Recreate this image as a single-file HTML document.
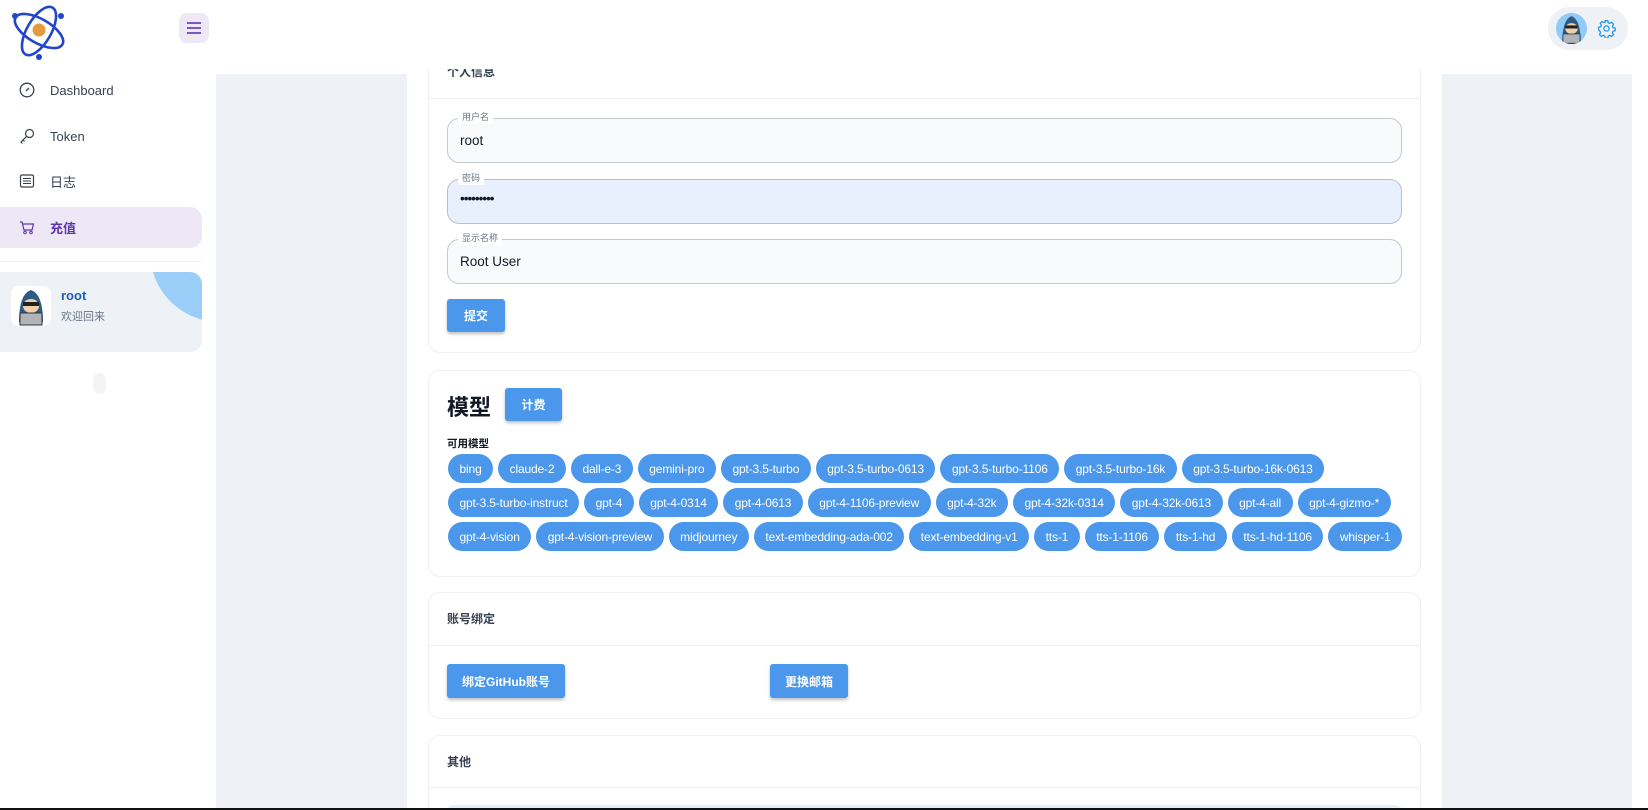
<!DOCTYPE html>
<html><head><meta charset="utf-8"><style>
*{box-sizing:border-box;margin:0;padding:0}
html,body{width:1648px;height:810px;overflow:hidden}
body{background:#fff;font-family:"Liberation Sans","Noto Sans CJK SC",sans-serif;color:#364152;position:relative}
#wrap{position:absolute;left:0;top:0;width:1648px;height:808px;overflow:hidden}
.abs{position:absolute}
.grey{background:#eef2f6}
.nav{position:absolute;left:0;width:202px;height:40px;display:flex;align-items:center;font-size:13px;color:#364152}
.nav svg{position:absolute;left:19px}
.nav span{position:absolute;left:50px}
.card{position:absolute;left:428px;width:993px;background:#fff;border:1px solid #eef0f3;border-radius:12px}
.field{position:absolute;left:447px;width:955px;height:45px;border:1px solid #c4c9d0;border-radius:12px;background:#f8fafc}
.field .lb{position:absolute;top:-9px;left:10px;background:#fff;padding:0 4px;font-size:9px;color:#697586;line-height:14px}
.field .v{position:absolute;left:12px;top:14px;font-size:13.5px;color:#121926;font-weight:500}
.btn{position:absolute;background:#4a97eb;color:#fff;font-size:12px;font-weight:bold;border-radius:3px;display:flex;align-items:center;justify-content:center;box-shadow:0 2px 3px rgba(0,0,0,.25)}
.row{position:absolute;left:448px;display:flex;gap:5px}
.chip{height:29px;background:#4a97eb;color:#fff;border-radius:15px;padding:0 11.5px;font-size:12px;letter-spacing:-0.15px;display:flex;align-items:center;white-space:nowrap}
.ttl{position:absolute;font-size:12px;font-weight:bold;color:#364152}
.hr{position:absolute;left:428px;width:993px;height:1px;background:#eef0f3}
</style></head><body><div id="wrap">
<div class="abs grey" style="left:216px;top:74px;width:191px;height:736px"></div>
<div class="abs grey" style="left:1442px;top:74px;width:190px;height:736px"></div>

<div class="card" style="top:40px;height:313px;border-radius:0 0 12px 12px"></div>
<div class="ttl" style="left:447px;top:63px;color:#364152">个人信息</div>
<div class="hr" style="top:98px"></div>
<div class="field" style="top:118px"><div class="lb">用户名</div><div class="v">root</div></div>
<div class="field" style="top:179px;background:#e8f0fe;border-color:#b8c0cc"><div class="lb">密码</div><div class="v" style="top:11px;letter-spacing:-1px">•••••••••</div></div>
<div class="field" style="top:239px"><div class="lb">显示名称</div><div class="v">Root User</div></div>
<div class="btn" style="left:447px;top:299px;width:58px;height:33px">提交</div>

<div class="card" style="top:370px;height:207px"></div>
<div class="abs" style="left:447px;top:390px;font-size:22px;font-weight:bold;color:#121926">模型</div>
<div class="btn" style="left:505px;top:388px;width:57px;height:33px">计费</div>
<div class="abs" style="left:447px;top:436px;font-size:10.5px;font-weight:bold;color:#121926">可用模型</div>
<div class="row" style="top:454px"><div class="chip">bing</div><div class="chip">claude-2</div><div class="chip">dall-e-3</div><div class="chip">gemini-pro</div><div class="chip">gpt-3.5-turbo</div><div class="chip">gpt-3.5-turbo-0613</div><div class="chip">gpt-3.5-turbo-1106</div><div class="chip">gpt-3.5-turbo-16k</div><div class="chip">gpt-3.5-turbo-16k-0613</div></div>
<div class="row" style="top:488px"><div class="chip">gpt-3.5-turbo-instruct</div><div class="chip">gpt-4</div><div class="chip">gpt-4-0314</div><div class="chip">gpt-4-0613</div><div class="chip">gpt-4-1106-preview</div><div class="chip">gpt-4-32k</div><div class="chip">gpt-4-32k-0314</div><div class="chip">gpt-4-32k-0613</div><div class="chip">gpt-4-all</div><div class="chip">gpt-4-gizmo-*</div></div>
<div class="row" style="top:522px"><div class="chip">gpt-4-vision</div><div class="chip">gpt-4-vision-preview</div><div class="chip">midjourney</div><div class="chip">text-embedding-ada-002</div><div class="chip">text-embedding-v1</div><div class="chip">tts-1</div><div class="chip">tts-1-1106</div><div class="chip">tts-1-hd</div><div class="chip">tts-1-hd-1106</div><div class="chip">whisper-1</div></div>

<div class="card" style="top:592px;height:127px"></div>
<div class="ttl" style="left:447px;top:610px">账号绑定</div>
<div class="hr" style="top:645px"></div>
<div class="btn" style="left:447px;top:664px;width:118px;height:34px">绑定GitHub账号</div>
<div class="btn" style="left:770px;top:664px;width:78px;height:34px">更换邮箱</div>

<div class="card" style="top:735px;height:100px"></div>
<div class="ttl" style="left:447px;top:753px">其他</div>
<div class="hr" style="top:787px"></div>
<div class="abs" style="left:447px;top:805px;width:955px;height:6px;background:#e3f2fd;border-radius:6px 6px 0 0"></div>

<!-- top bar covers -->
<div class="abs" style="left:0;top:0;width:1648px;height:69px;background:#fff"></div>

<!-- logo -->
<svg class="abs" style="left:9px;top:1px" width="60" height="60" viewBox="0 0 60 60">
<g fill="none" stroke="#2246c8" stroke-width="2.6">
<ellipse cx="30" cy="30" rx="27" ry="12" transform="rotate(30 30 30)"/>
<ellipse cx="30" cy="30" rx="27" ry="12" transform="rotate(-60 30 30)"/>
</g>
<circle cx="30" cy="29" r="6.5" fill="#e59a40"/>
<circle cx="6" cy="15" r="3" fill="#2246c8"/><circle cx="52" cy="15" r="3" fill="#2246c8"/><circle cx="30" cy="56" r="3" fill="#2246c8"/>
</svg>
<div class="abs" style="left:179px;top:13px;width:30px;height:30px;background:#ede7f6;border-radius:8px"></div>
<svg class="abs" style="left:186px;top:21px" width="16" height="14"><g stroke="#5e35b1" stroke-width="1.6"><line x1="1" y1="2" x2="15" y2="2"/><line x1="1" y1="7" x2="15" y2="7"/><line x1="1" y1="12" x2="15" y2="12"/></g></svg>

<div class="nav" style="top:70px"><svg width="16" height="16" viewBox="0 0 16 16"><circle cx="8" cy="8" r="6.8" fill="none" stroke="#364152" stroke-width="1.3"/><line x1="7" y1="9" x2="10" y2="6" stroke="#364152" stroke-width="1.3"/></svg><span>Dashboard</span></div>
<div class="nav" style="top:116px"><svg width="16" height="16" viewBox="0 0 16 16"><circle cx="10.5" cy="5.5" r="4" fill="none" stroke="#364152" stroke-width="1.2"/><path d="M7.5 8.5L2 14l1.5 1.5M4 12l1.5 1.5" fill="none" stroke="#364152" stroke-width="1.2"/></svg><span>Token</span></div>
<div class="nav" style="top:161px"><svg width="16" height="16" viewBox="0 0 16 16"><rect x="1.5" y="2" width="13" height="12" rx="1.5" fill="none" stroke="#364152" stroke-width="1.2"/><path d="M4 5.5h8M4 8h8M4 10.5h8" stroke="#364152" stroke-width="1.1"/></svg><span>日志</span></div>
<div class="abs" style="left:0;top:207px;width:202px;height:41px;background:#ede7f6;border-radius:0 12px 12px 0"></div>
<div class="nav" style="top:207px;color:#5e35b1;font-weight:bold"><svg width="16" height="16" viewBox="0 0 16 16"><path d="M1 3h2l2 8h8l1.5-6H4" fill="none" stroke="#5e35b1" stroke-width="1.2"/><circle cx="6" cy="13.5" r="1.3" fill="none" stroke="#5e35b1"/><circle cx="12" cy="13.5" r="1.3" fill="none" stroke="#5e35b1"/></svg><span>充值</span></div>
<div class="abs" style="left:0;top:261px;width:202px;height:1px;background:#eef2f6"></div>
<div class="abs" style="left:0;top:272px;width:202px;height:80px;background:#eef2f6;border-radius:0 12px 12px 0;overflow:hidden">
<div class="abs" style="left:150px;top:-90px;width:140px;height:140px;border-radius:50%;background:#90caf9;opacity:.9"></div>
</div>
<div class="abs" style="left:11px;top:286px;width:40px;height:40px;background:#fff;border-radius:8px;overflow:hidden">
<svg width="40" height="40" viewBox="0 0 40 40"><path d="M8 36 Q8 8 20 4 Q32 8 32 36Z" fill="#2e5b86"/><ellipse cx="20" cy="20" rx="8" ry="7" fill="#f0d0a8"/><rect x="12" y="16" width="16" height="4" fill="#222"/><rect x="9" y="27" width="22" height="12" fill="#b0b4b8" stroke="#333"/></svg></div>
<div class="abs" style="left:61px;top:288px;font-size:13px;font-weight:bold;color:#1e5db4">root</div>
<div class="abs" style="left:61px;top:308px;font-size:11px;color:#697586">欢迎回来</div>
<div class="abs" style="left:93px;top:373px;width:13px;height:21px;background:#f2f4f6;border-radius:7px"></div>

<!-- header right -->
<div class="abs" style="left:1548px;top:7px;width:80px;height:43px;background:#eef2f6;border-radius:22px"></div>
<div class="abs" style="left:1556px;top:13px;width:31px;height:31px;border-radius:50%;background:#90caf9;overflow:hidden">
<svg width="31" height="31" viewBox="0 0 40 40"><path d="M8 40 Q8 8 20 4 Q32 8 32 40Z" fill="#2e5b86"/><ellipse cx="20" cy="20" rx="8" ry="7" fill="#f0d0a8"/><rect x="12" y="16" width="16" height="4" fill="#222"/><rect x="9" y="27" width="22" height="12" fill="#b0b4b8" stroke="#333"/></svg></div>
<svg class="abs" style="left:1597px;top:19px" width="19" height="19" viewBox="0 0 24 24"><path d="M10.3 2h3.4l.5 2.6 2 1 2.3-1.4 2.4 2.4-1.4 2.3.8 2 2.7.5v3.4l-2.7.5-.8 2 1.4 2.3-2.4 2.4-2.3-1.4-2 .8-.5 2.7h-3.4l-.5-2.7-2-.8-2.3 1.4-2.4-2.4 1.4-2.3-.8-2L2 13.7v-3.4l2.7-.5.8-2-1.4-2.3 2.4-2.4 2.3 1.4 2-1z" fill="none" stroke="#2196f3" stroke-width="1.6" stroke-linejoin="round"/><circle cx="12" cy="12" r="3.3" fill="none" stroke="#2196f3" stroke-width="1.6"/></svg>
</div>
<div class="abs" style="left:0;top:808px;width:1648px;height:2px;background:#111"></div>
</body></html>
